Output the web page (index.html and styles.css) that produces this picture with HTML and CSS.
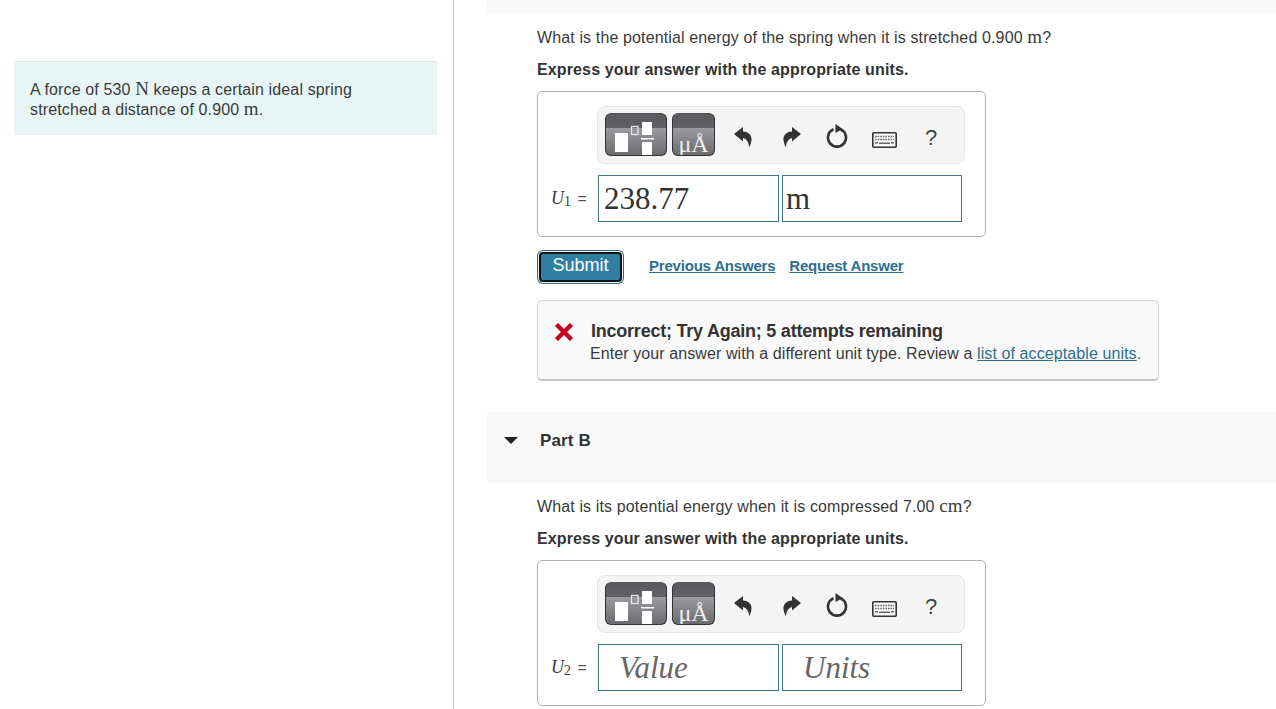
FILE: index.html
```html
<!DOCTYPE html>
<html lang="en">
<head>
<meta charset="utf-8">
<title>Part A and Part B</title>
<link rel="stylesheet" href="styles.css">
</head>
<body>
<svg class="defs" width="0" height="0" aria-hidden="true">
  <defs>
    <symbol id="tpl" viewBox="0 0 62 43">
      <rect x="10" y="20" width="13" height="19" fill="#fff"/>
      <rect x="26.500" y="13.500" width="6.500" height="8" fill="none" stroke="#e6e6e6" stroke-width="1.300"/>
      <rect x="37" y="9" width="10" height="13" fill="#fff"/>
      <rect x="36" y="25" width="13" height="1.500" fill="#fff"/>
      <rect x="37" y="29" width="10" height="13" fill="#fff"/>
    </symbol>
    <symbol id="undo" viewBox="0 0 18 21">
      <path d="M0 7 L9 0 V4.500 C15 4.500 18 9 17.500 13 C17.300 16 16 19 15 20.500 C15 16 13 12 9 11 V14.500 Z" fill="#333"/>
    </symbol>
    <symbol id="redo" viewBox="0 0 18 21">
      <path d="M18 7 L9 0 V4.500 C3 4.500 0 9 0.500 13 C0.700 16 2 19 3 20.500 C3 16 5 12 9 11 V14.500 Z" fill="#333"/>
    </symbol>
    <symbol id="reset" viewBox="0 0 22 24">
      <path d="M7.500 5.300 A9 9 0 1 0 14.500 5.300" fill="none" stroke="#333" stroke-width="2.600"/>
      <path d="M9.500 0 L16.500 5 L9.500 9 Z" fill="#333"/>
    </symbol>
    <symbol id="keys" viewBox="0 0 25 16">
      <rect x="0.800" y="0.800" width="23.400" height="14.400" rx="1" fill="#f8f8f8" stroke="#333" stroke-width="1.600"/>
      <path d="M3 4.500 H22 M3 7.500 H22" stroke="#666" stroke-width="1.500" stroke-dasharray="1.600 1"/>
      <path d="M3 10.800 H6 M7 11.300 H18 M19 10.800 H22" stroke="#666" stroke-width="1.500"/>
    </symbol>
  </defs>
</svg>
<div class="page">
  <aside class="side">
    <div class="intro">A force of 530 <span class="unit">N</span> keeps a certain ideal spring<br>stretched a distance of 0.900 <span class="unit">m</span>.</div>
  </aside>
  <main class="main">
    <div class="strip"></div>
    <section class="part first">
      <p class="q">What is the potential energy of the spring when it is stretched 0.900 <span class="unit">m</span>?</p>
      <p class="hint">Express your answer with the appropriate units.</p>
      <div class="answer">
        <div class="toolbar">
          <span class="tbtn wide"><svg class="tpl"><use href="#tpl"/></svg></span>
          <span class="tbtn narrow"><span class="mu">μÅ</span></span>
          <svg class="ic undo"><use href="#undo"/></svg>
          <svg class="ic redo"><use href="#redo"/></svg>
          <svg class="ic reset"><use href="#reset"/></svg>
          <svg class="ic keys"><use href="#keys"/></svg>
          <span class="help">?</span>
        </div>
        <div class="fields">
          <span class="lbl"><i>U</i><sub>1</sub> <span class="eq">=</span></span>
          <span class="field val">238.77</span>
          <span class="field uni">m</span>
        </div>
      </div>
      <div class="actions">
        <button class="submit" type="button">Submit</button>
        <a class="link first-link" href="#">Previous Answers</a>
        <a class="link" href="#">Request Answer</a>
      </div>
      <div class="feedback">
        <svg class="x" viewBox="0 0 18 18" aria-hidden="true"><path d="M3 3 L15 15 M15 3 L3 15" stroke="#c8001e" stroke-width="4.400" stroke-linecap="square"/></svg>
        <div class="msg">
          <div class="msg-title">Incorrect; Try Again; 5 attempts remaining</div>
          <div class="msg-body">Enter your answer with a different unit type. Review a <a class="plain" href="#">list of acceptable units</a><span class="dot">.</span></div>
        </div>
      </div>
    </section>
    <div class="part-head"><span class="tri"></span><span class="part-name">Part B</span></div>
    <section class="part">
      <p class="q">What is its potential energy when it is compressed 7.00 <span class="unit">cm</span>?</p>
      <p class="hint">Express your answer with the appropriate units.</p>
      <div class="answer">
        <div class="toolbar">
          <span class="tbtn wide"><svg class="tpl"><use href="#tpl"/></svg></span>
          <span class="tbtn narrow"><span class="mu">μÅ</span></span>
          <svg class="ic undo"><use href="#undo"/></svg>
          <svg class="ic redo"><use href="#redo"/></svg>
          <svg class="ic reset"><use href="#reset"/></svg>
          <svg class="ic keys"><use href="#keys"/></svg>
          <span class="help">?</span>
        </div>
        <div class="fields">
          <span class="lbl"><i>U</i><sub>2</sub> <span class="eq">=</span></span>
          <span class="field val ph">Value</span>
          <span class="field uni ph">Units</span>
        </div>
      </div>
    </section>
  </main>
</div>
</body>
</html>
```

FILE: styles.css
```css
* { box-sizing: border-box; }
html, body { margin: 0; height: 100%; overflow: hidden; background: #fff; }
body { font-family: "Liberation Sans", Arial, sans-serif; font-size: 16px; color: #3a3a3a; letter-spacing: 0.13px; }
.defs { display: block; height: 0; }
.page { display: flex; height: 709px; overflow: hidden; }
.side { flex: 0 0 454px; border-right: 1px solid #c8c8c8; padding: 61px 16px 0 14px; }
.intro { height: 74px; background: #e7f5f5; border-top: 1px solid #dde6e8; padding: 18px 16px 0; line-height: 20px; }
.unit { font-family: "Liberation Serif", serif; font-size: 19px; line-height: 0; }
.main { flex: 1; margin-left: 33px; min-width: 0; }
.strip { height: 13px; background: #f9f9f9; }
.part { padding-left: 50px; }
.q { margin: 0; padding-top: 15px; line-height: 20px; }
.part:not(.first) .q { padding-top: 14px; }
.hint { margin: 12px 0 0; line-height: 20px; font-weight: bold; color: #333; }
.answer { width: 449px; height: 146px; margin-top: 11px; border: 1px solid #b3b3b3; border-radius: 5px; padding: 14px 0 0 12px; letter-spacing: 0; }
.toolbar { display: flex; align-items: flex-start; width: 368px; height: 58px; margin-left: 47px; padding: 6px 0 0 7px; background: #f4f4f4; border: 1px solid #e6e6e6; border-radius: 8px; }
.tbtn { display: block; height: 43px; border-radius: 6px; border: 1px solid #333; border-top-color: #555;
  background: linear-gradient(#5b5b5f 0, #616165 14px, #9a9a9f 14px, #6b6b70 100%); overflow: hidden; }
.wide { width: 62px; }
.narrow { width: 43px; margin-left: 5px; text-align: center; }
.tpl { display: block; width: 62px; height: 43px; margin: -1px; }
.mu { display: block; margin-top: 15px; font-family: "Liberation Serif", serif; font-size: 24px; line-height: 30px; color: #eee; white-space: nowrap; }
.ic { flex: none; display: block; }
.undo { width: 18px; height: 21px; margin: 14px 0 0 19px; }
.redo { width: 18px; height: 21px; margin: 14px 0 0 31px; }
.reset { width: 22px; height: 24px; margin: 11px 0 0 25px; }
.keys { width: 25px; height: 16px; margin: 19px 0 0 24px; }
.help { margin: 12px 0 0 28px; font-size: 22px; line-height: 26px; color: #444; }
.fields { display: flex; align-items: center; margin-top: 11px; }
.lbl { width: 48px; flex: none; padding-left: 1px; font-family: "Liberation Serif", serif; font-size: 18px; line-height: 20px; white-space: nowrap; }
.lbl sub { font-size: 14px; line-height: 0; vertical-align: -2px; }
.eq { margin-left: 2px; font-family: "Liberation Sans", sans-serif; font-size: 16px; color: #555; }
.field { display: block; flex: none; width: 181px; height: 47px; border: 1px solid #3d7488; font-family: "Liberation Serif", serif; font-size: 31px; line-height: 46px; padding-left: 5px; color: #333; }
.uni { width: 180px; margin-left: 3px; padding-left: 3px; }
.ph { font-style: italic; color: #666; padding-left: 20px; }
.actions { display: flex; align-items: center; margin-top: 13px; height: 34px; letter-spacing: 0; }
.submit { width: 83px; height: 30px; margin: 2px; padding: 0 0 4px; background: #2f7fa2; color: #fff; font: 18px "Liberation Sans", sans-serif; border: 2px solid #111; border-radius: 4px; box-shadow: 0 0 0 1px #e8f0f3, 0 0 0 2px #2f6d85; }
.link { color: #2d6e8e; font-size: 15px; font-weight: bold; letter-spacing: -0.2px; margin: 0 0 4px 14px; }
.first-link { margin-left: 25px; }
.feedback { display: flex; width: 622px; height: 81px; margin-top: 16px; background: #f9f9f9; border: 1px solid #d4d4d4; border-bottom: 2px solid #c4c4c4; border-radius: 5px; padding: 19px 0 0 17px; letter-spacing: 0.09px; }
.x { flex: none; width: 18px; height: 18px; margin-top: 3px; }
.msg { margin-left: 17px; }
.msg-title { font-size: 18px; font-weight: bold; line-height: 23px; margin-left: 1px; letter-spacing: -0.23px; color: #333; }
.msg-body { line-height: 22px; }
.plain, .dot { color: #2d6e8e; }
.part-head { display: flex; align-items: flex-start; height: 71px; margin-top: 31px; background: #f9f9f9; padding: 19px 0 0 17px; }
.tri { width: 0; height: 0; margin-top: 6px; border-left: 7px solid transparent; border-right: 7px solid transparent; border-top: 7px solid #222; }
.part-name { margin-left: 22px; font-weight: bold; font-size: 17px; line-height: 20px; letter-spacing: 0.15px; color: #333; }
```
